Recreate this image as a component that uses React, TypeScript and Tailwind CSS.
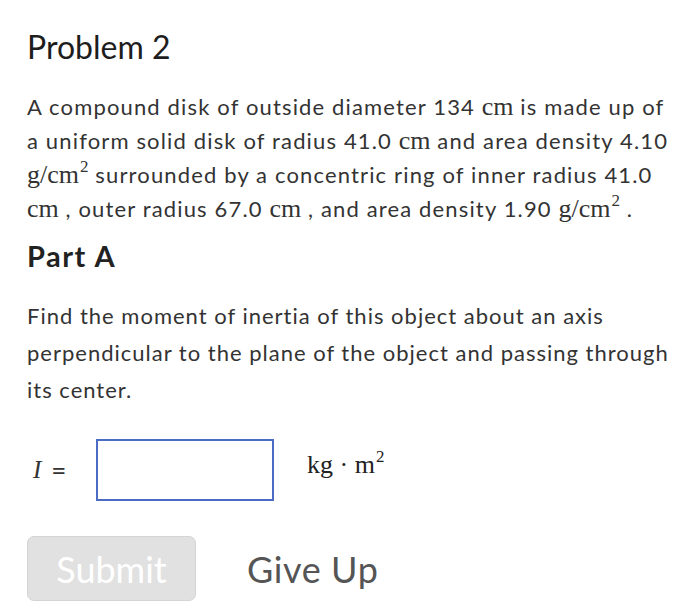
import type { FC, ReactNode } from "react";

const M: FC<{ children: ReactNode }> = ({ children }) => (
  <span className="font-['Liberation_Serif',serif] text-[26px] tracking-normal text-[#333]">
    {children}
  </span>
);

const Sup: FC = () => (
  <sup className="text-[17px] -top-[11px] ml-[1px]">2</sup>
);

export default function App() {
  return (
    <div className="w-[700px] h-[615px] bg-white pl-[27px] pr-[20px] font-['Lato',sans-serif] text-[#333] overflow-hidden">
      {/* Title */}
      <h1 className="pt-[27px] text-[32px] leading-[40px] text-[#1d1d1d]">
        Problem 2
      </h1>

      {/* Problem statement */}
      <p className="mt-[23px] text-[22px] leading-[34px] tracking-[1.15px]">
        A compound disk of outside diameter 134 <M>cm</M> is made up of
        <br />
        a uniform solid disk of radius 41.0 <M>cm</M> and area density 4.10
        <br />
        <M>
          g/cm
          <Sup />
        </M>{" "}
        {" "}surrounded by a concentric ring of inner radius 41.0
        <br />
        <M>cm</M> , outer radius 67.0 <M>cm</M> , and area density 1.90{" "}
        <M>
          g/cm
          <Sup />
        </M>{" "}
        {" "}.
      </p>

      {/* Part A */}
      <h2 className="mt-[13px] text-[29px] leading-[34px] font-bold tracking-[1.5px] text-[#222]">
        Part A
      </h2>

      <p className="mt-[24px] text-[22px] leading-[37px] tracking-[1px]">
        Find the moment of inertia of this object about an axis
        <br />
        perpendicular to the plane of the object and passing through
        <br />
        its center.
      </p>

      {/* Answer row */}
      <div className="mt-[31px] flex items-center">
        <span className="pl-[6px] w-[69px] flex items-center gap-[10px]">
          <span className="font-['Liberation_Serif',serif] italic text-[25px]">
            I
          </span>
          <span className="text-[26px]">=</span>
        </span>
        <input
          className="w-[178px] h-[62px] border-2 border-[#4a6cc4] bg-white outline-none"
          type="text"
        />
        <span className="ml-[33px] -mt-[12px] font-['Liberation_Serif',serif] text-[26px] text-[#222]">
          kg · m
          <Sup />
        </span>
      </div>

      {/* Buttons */}
      <div className="mt-[35px] flex items-center">
        <button className="w-[169px] h-[65px] rounded-[7px] bg-[#e1e1e1] border border-[#d4d4d4] text-[36px] text-white">
          Submit
        </button>
        <button className="ml-[51px] text-[36px] tracking-[0.6px] text-[#555]">
          Give Up
        </button>
      </div>
    </div>
  );
}
